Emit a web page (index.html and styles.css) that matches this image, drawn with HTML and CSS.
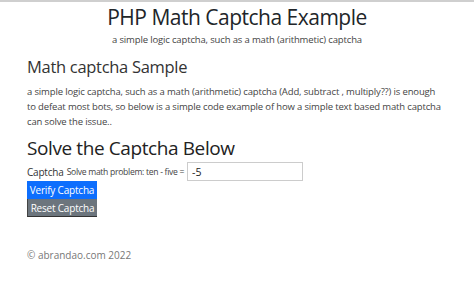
FILE: index.html
```html
<!DOCTYPE html>
<html lang="en">

<head>
    <meta charset="UTF-8">
    <meta name="viewport" content="width=device-width, initial-scale=1.0">
    <title>PHP Math Captcha Example</title>
    <link rel="stylesheet" href="styles.css">
</head>

<body>

    <div class="header">
        <h1>PHP Math Captcha Example</h1>
        <p class="lead">a simple logic captcha, such as a math (arithmetic) captcha</p>
    </div>

    <div class="content">
        <h3>Math captcha Sample</h3>
        <p class="intro">a simple logic captcha, such as a math (arithmetic) captcha (Add, subtract , multiply??) is enough
            <br>to defeat most bots, so below is a simple code example of how a simple text based math captcha
            <br>can solve the issue..</p>

        <h2>Solve the Captcha Below</h2>
        <form id="captcha">
            <div class="form-row">
                <label for="answer">Captcha</label>
                <span class="problem">Solve math problem: ten - five =</span>
                <input type="text" id="answer" name="answer" value="-5">
            </div>
            <button type="submit" class="btn btn-primary">Verify Captcha</button>
            <button type="reset" class="btn btn-secondary">Reset Captcha</button>
        </form>

        <footer>&copy; abrandao.com 2022</footer>
    </div>

</body>

</html>
```

FILE: styles.css
```css
* {
    box-sizing: border-box;
    margin: 0;
    padding: 0;
    font-family: "Open Sans", Arial, sans-serif;
}

body {
    border-top: 2px solid #cfcfcf;
    background-color: #fff;
    color: #212529;
}

.header {
    text-align: center;
    padding-top: 2px;
}

.header h1 {
    font-size: 21px;
    font-weight: 400;
    line-height: 26px;
    letter-spacing: -0.5px;
}

.lead {
    font-size: 9.5px;
    color: #444;
    margin-top: 3px;
    letter-spacing: -0.15px;
}

.content {
    padding: 0 16px 0 27px;
}

.content h3 {
    font-size: 16.5px;
    font-weight: 400;
    color: #333;
    margin-top: 10px;
    line-height: 22px;
    letter-spacing: -0.3px;
}

.intro {
    font-size: 9.5px;
    line-height: 15px;
    color: #444;
    margin-top: 6px;
    letter-spacing: -0.15px;
}

.content h2 {
    font-size: 19px;
    font-weight: 500;
    color: #222;
    margin-top: 8px;
    line-height: 22px;
    letter-spacing: -0.4px;
}

.form-row {
    display: flex;
    align-items: center;
    margin-top: 3px;
}

.form-row label {
    font-size: 10px;
    color: #333;
    margin-right: 3px;
    letter-spacing: -0.2px;
}

.problem {
    font-size: 8.6px;
    color: #444;
    margin-right: 3px;
    letter-spacing: -0.3px;
}

.form-row input {
    width: 116px;
    height: 19px;
    border: 1px solid #ccc;
    padding: 0 4px;
    font-size: 10.5px;
    color: #222;
}

.btn {
    display: block;
    width: 70px;
    height: 18px;
    border: none;
    font-size: 10px;
    color: #fff;
    cursor: pointer;
    letter-spacing: -0.2px;
}

.btn-primary {
    background-color: #0d6efd;
}

.btn-secondary {
    background-color: #6c757d;
    border-bottom: 1px solid #333;
    border-left: 1px solid #444;
}

footer {
    margin-top: 31px;
    font-size: 10px;
    color: #777;
}
```
